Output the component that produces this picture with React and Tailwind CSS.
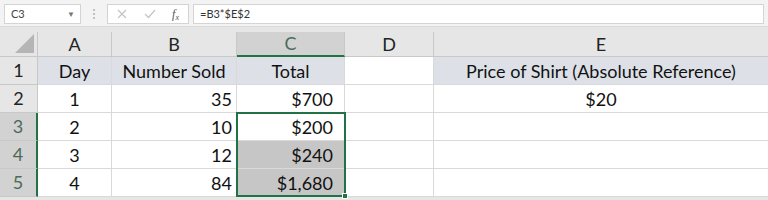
import { useState } from "react";

const cols = ["A", "B", "C", "D", "E"];

const rows = [
  { n: 1, cells: ["Day", "Number Sold", "Total", "", "Price of Shirt (Absolute Reference)"], head: true },
  { n: 2, cells: ["1", "35", "$700", "", "$20"] },
  { n: 3, cells: ["2", "10", "$200", "", ""] },
  { n: 4, cells: ["3", "12", "$240", "", ""] },
  { n: 5, cells: ["4", "84", "$1,680", "", ""] },
];

function cellClass(r, ci) {
  let base = "flex items-center border-b border-r border-[#d9d9d9] text-[18px] text-[#111] leading-none whitespace-nowrap overflow-hidden";
  if (r.head) {
    base += ci === 3 ? " bg-white justify-center" : " bg-[#dde1e7] justify-center";
    return base;
  }
  if (ci === 0 || ci === 4) return base + " bg-white justify-center";
  if (ci === 1) return base + " bg-white justify-end pr-[4px]";
  if (ci === 2) {
    const shade = r.n === 4 || r.n === 5;
    return base + (shade ? " bg-[#c6c6c6]" : " bg-white") + " justify-end pr-[11px]";
  }
  return base + " bg-white";
}

export default function App() {
  const [formula] = useState("=B3*$E$2");

  return (
    <div className="w-[768px] h-[200px] overflow-hidden bg-[#e6e6e6]" style={{ fontFamily: "Lato, 'Open Sans', sans-serif" }}>
      {/* formula bar */}
      <div className="flex h-[27px] items-center gap-[4px] bg-[#f3f3f3] px-[4px] pt-[2px] border-b border-[#dadada]">
        <div className="flex h-[20px] w-[77px] items-center justify-between border border-[#d4d4d4] bg-white pl-[6px] pr-[5px] text-[11px] text-[#444]">
          <span>C3</span>
          <span className="text-[8px] text-[#777]">▼</span>
        </div>
        <div className="flex w-[18px] flex-col items-center gap-[2px]">
          <span className="h-[2px] w-[2px] bg-[#c0c0c0]" />
          <span className="h-[2px] w-[2px] bg-[#c0c0c0]" />
          <span className="h-[2px] w-[2px] bg-[#c0c0c0]" />
        </div>
        <div className="flex h-[20px] w-[82px] items-center justify-between border border-[#d4d4d4] bg-white px-[9px]">
          <svg width="10" height="10" viewBox="0 0 10 10" className="stroke-[#c4c4c4]">
            <path d="M1 1 L9 9 M9 1 L1 9" strokeWidth="1.2" fill="none" />
          </svg>
          <svg width="12" height="10" viewBox="0 0 12 10" className="stroke-[#c4c4c4]">
            <path d="M1 5 L4.5 8.5 L11 1" strokeWidth="1.2" fill="none" />
          </svg>
          <span className="text-[12px] italic text-[#555]" style={{ fontFamily: "'Liberation Serif', serif" }}>
            f<sub className="text-[8px]">x</sub>
          </span>
        </div>
        <div className="flex h-[20px] flex-1 items-center border border-[#d4d4d4] bg-white pl-[6px] text-[11px] text-[#333]">
          {formula}
        </div>
      </div>

      {/* sheet */}
      <div className="relative mt-[5px] grid grid-cols-[38px_74px_125px_108px_89px_335px] grid-rows-[25px_28px_28px_28px_28px_28px]">
        <div className="relative border-r border-b border-[#c8c8c8] bg-[#e6e6e6]">
          <div className="absolute bottom-[3px] right-[3px] h-0 w-0 border-b-[19px] border-l-[19px] border-b-[#b5b5b5] border-l-transparent" />
        </div>
        {cols.map((c) => (
          <div
            key={c}
            className={
              c === "C"
                ? "flex items-center justify-center border-r border-[#c8c8c8] border-b-2 border-b-[#217346] bg-[#d2d2d2] text-[18px] text-[#4b6b58]"
                : "flex items-center justify-center border-r border-b border-[#c8c8c8] bg-[#e6e6e6] text-[18px] text-[#222]"
            }
          >
            {c}
          </div>
        ))}

        {rows.map((r) => {
          const sel = r.n >= 3;
          return [
            <div
              key={"h" + r.n}
              className={
                sel
                  ? "flex items-center justify-center border-b border-[#c8c8c8] border-r-2 border-r-[#217346] bg-[#d2d2d2] text-[18px] text-[#4b6b58]"
                  : "flex items-center justify-center border-r border-b border-[#c8c8c8] bg-[#e6e6e6] text-[18px] text-[#222]"
              }
            >
              {r.n}
            </div>,
            ...r.cells.map((t, i) => (
              <div key={r.n + "-" + i} className={cellClass(r, i)}>
                {t}
              </div>
            )),
          ];
        })}

        {/* selection C3:C5 */}
        <div className="pointer-events-none absolute left-[236px] top-[80px] h-[85px] w-[110px] border-2 border-[#217346]">
          <div className="absolute -bottom-[4px] -right-[4px] h-[6px] w-[6px] border border-white bg-[#217346]" />
        </div>
      </div>
    </div>
  );
}
